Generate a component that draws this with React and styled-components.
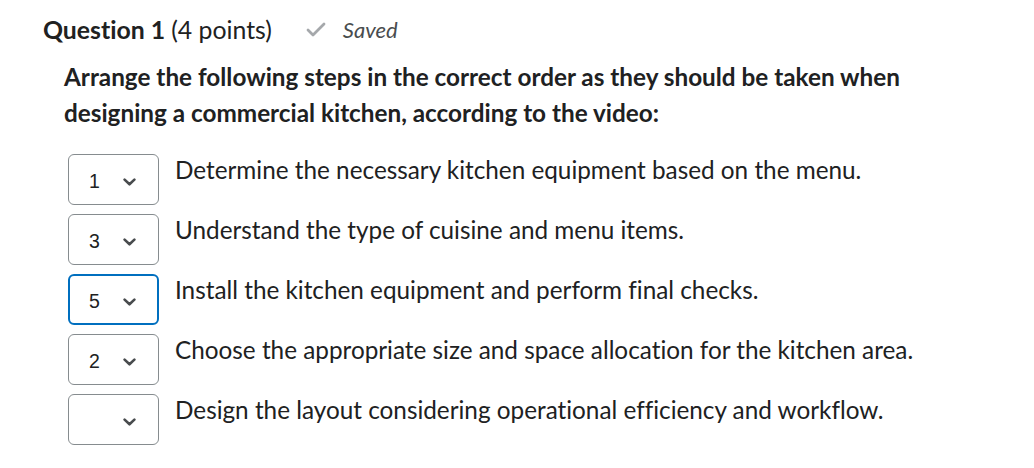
import React from "react";
import styled, { createGlobalStyle } from "styled-components";

const GlobalStyle = createGlobalStyle`
  body {
    margin: 0;
    background: #ffffff;
    font-family: Lato, "Noto Sans", sans-serif;
    color: #202122;
    font-variant-ligatures: none;
  }
`;

const Page = styled.div`
  padding: 12px 0 0 43px;
`;

const Header = styled.div`
  display: flex;
  align-items: center;
  gap: 34px;
  height: 34px;
`;

const Title = styled.h2`
  margin: 0;
  font-size: 24.8px;
  font-weight: 700;
  color: #202122;
  span {
    font-weight: 400;
  }
`;

const Status = styled.div`
  display: flex;
  align-items: center;
  gap: 17px;
  font-size: 22px;
  font-style: italic;
  color: #494c4e;
`;

const Body = styled.div`
  padding: 13px 0 0 21px;
`;

const Prompt = styled.p`
  margin: 0;
  font-size: 24.3px;
  font-weight: 700;
  line-height: 36px;
  max-width: 860px;
`;

const List = styled.div`
  display: flex;
  flex-direction: column;
  gap: 9px;
  padding: 23px 0 0 4px;
`;

const Row = styled.div`
  display: flex;
  align-items: flex-start;
  gap: 16px;
`;

const Select = styled.div`
  box-sizing: border-box;
  width: 91px;
  height: 51px;
  border-radius: 6px;
  border: ${(p) => (p.focused ? "2px solid #006fbf" : "1px solid #868c8f")};
  display: flex;
  align-items: center;
  justify-content: space-between;
  padding: 4px ${(p) => (p.focused ? "21px" : "22px")} 0 ${(p) => (p.focused ? "19px" : "20px")};
  font-family: "Liberation Sans", Arial, sans-serif;
  font-size: 19.5px;
  color: #202122;
`;

const Value = styled.span`
  min-width: 10px;
`;

const Label = styled.div`
  font-size: 24.3px;
  line-height: 30px;
  padding-top: 1px;
`;

const Check = () => (
  <svg width="20" height="15" viewBox="0 0 20 15">
    <path d="M2 8 L7 13 L18 2" fill="none" stroke="#a5a8ab" strokeWidth="2.8" strokeLinecap="round" strokeLinejoin="round" />
  </svg>
);

const Chevron = () => (
  <svg width="13" height="8" viewBox="0 0 13 8">
    <path d="M1.6 1.6 L6.5 6.3 L11.4 1.6" fill="none" stroke="#494c4e" strokeWidth="2.6" strokeLinecap="round" strokeLinejoin="round" />
  </svg>
);

const items = [
  { value: "1", text: "Determine the necessary kitchen equipment based on the menu." },
  { value: "3", text: "Understand the type of cuisine and menu items." },
  { value: "5", text: "Install the kitchen equipment and perform final checks.", focused: true },
  { value: "2", text: "Choose the appropriate size and space allocation for the kitchen area." },
  { value: "", text: "Design the layout considering operational efficiency and workflow." },
];

export default function App() {
  return (
    <Page>
      <GlobalStyle />
      <Header>
        <Title>
          Question 1 <span>(4 points)</span>
        </Title>
        <Status>
          <Check />
          Saved
        </Status>
      </Header>
      <Body>
        <Prompt>
          Arrange the following steps in the correct order as they should be taken when designing a commercial kitchen, according to the video:
        </Prompt>
        <List>
          {items.map((item, i) => (
            <Row key={i}>
              <Select focused={item.focused}>
                <Value>{item.value}</Value>
                <Chevron />
              </Select>
              <Label>{item.text}</Label>
            </Row>
          ))}
        </List>
      </Body>
    </Page>
  );
}
